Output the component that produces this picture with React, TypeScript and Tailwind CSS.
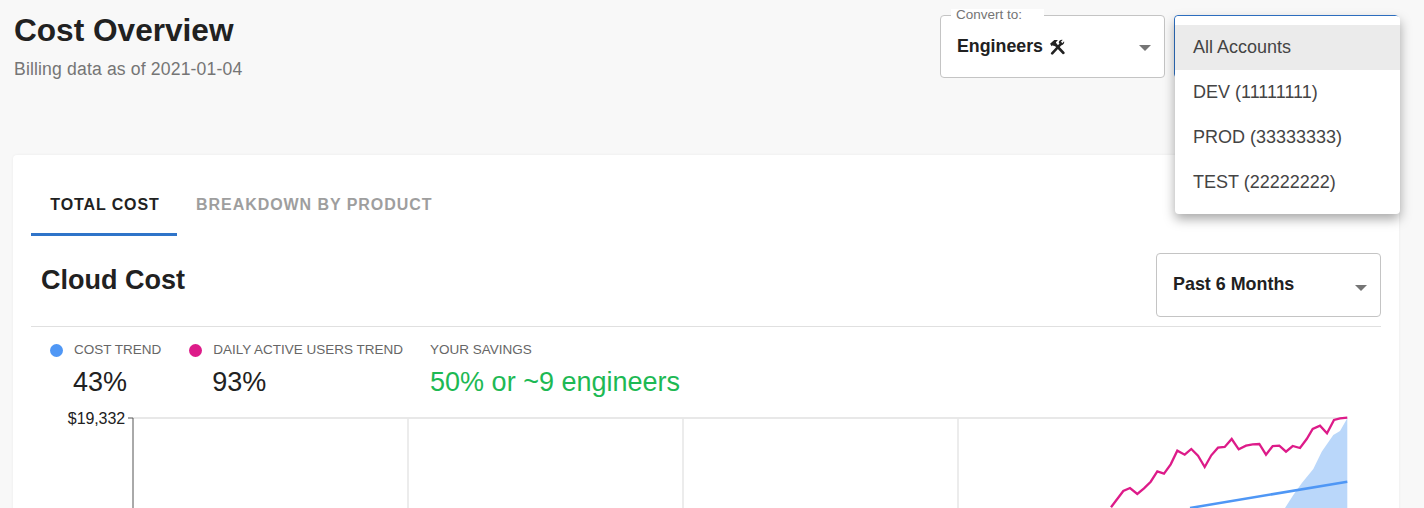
import React from 'react';

const font = "font-['Liberation_Sans',Arial,sans-serif]";

const accounts = ['All Accounts', 'DEV (11111111)', 'PROD (33333333)', 'TEST (22222222)'];

const pinkLine =
  '1111,507.3 1123.3,491 1130,488 1137.3,494 1144,488.3 1150.7,481.7 1157.3,471.3 1164,473.7 1170.7,464.3 1177.3,450.7 1184.7,454.7 1191.3,449 1198,455.7 1204.7,467 1211.3,455.3 1218,447.7 1224.7,447 1231.7,439 1238.7,449.3 1246,445.7 1252.7,444.3 1259.3,444 1266,454.7 1272.7,446 1279.3,445.7 1286,451.7 1292.7,446 1300,448 1306.7,439 1312.7,429 1320,425.7 1327,433.3 1334,420 1340,418.3 1347.3,417.7 ';

const savingsArea =
  '1285,508 1293.3,495 1301.7,483.3 1313.3,469 1321.7,451.7 1333.3,435 1340,431 1347.3,418.3 1347.3,508';

function Caret({ className = '' }: { className?: string }) {
  return (
    <svg width="12" height="6" viewBox="0 0 12 6" className={className}>
      <path d="M0 0h12L6 6z" fill="#757575" />
    </svg>
  );
}

function ToolsIcon() {
  return (
    <svg width="17" height="16" viewBox="0 0 16 15" className="ml-[6px] mt-[1px]">
      <path d="M4.5 3.5 13.5 13" stroke="#222" strokeWidth="2.6" strokeLinecap="round" fill="none" />
      <path d="M1 4.5 5 .8h3.4L6.5 3 7 5 5 6.8 3.5 5.8 2.5 6.8z" fill="#222" />
      <path d="M3 13.5 11.2 4.5" stroke="#222" strokeWidth="2.4" strokeLinecap="round" fill="none" />
      <path d="M9.2 3.5C9.2 1.6 11 .5 12.8.8l-1.6 1.8 1.3 1.3L14.2 2.2c.5 1.8-.7 3.7-2.7 3.6z" fill="#222" />
    </svg>
  );
}

function SelectBox({ label, tall, children }: { label?: string; tall?: boolean; children: React.ReactNode }) {
  return (
    <div
      className={`relative flex w-[225px] items-start justify-between rounded-[4px] border border-[#c4c4c4] bg-white pl-4 pr-[13px] pt-[19px] ${
        tall ? 'h-[64px]' : 'h-[63px]'
      }`}
    >
      {label && (
        <span className="absolute left-[10px] top-[-7px] h-2 w-[93px] bg-white pl-[5px] text-[13.5px] leading-[12px] text-[#757575]">
          {label}
        </span>
      )}
      {children}
    </div>
  );
}

function Legend({ color, label, value }: { color: string; label: string; value: string }) {
  return (
    <div className="flex flex-col">
      <div className="flex h-[20px] items-center">
        <span className="mr-[11px] h-[13px] w-[13px] rounded-full" style={{ background: color }} />
        <span className="text-[13.5px] text-[#666]">{label}</span>
      </div>
      <div className="ml-[23px] mt-[5px] text-[27px] leading-[34px] text-[#212121]">{value}</div>
    </div>
  );
}

function Chart() {
  return (
    <svg viewBox="31 410 1350 98" width="1350" height="98" className="mt-[1px] block">
      <path d="M133 418H1347" stroke="#e8e8e8" strokeWidth="2" />
      <path d="M408 418V508M683 418V508M958 418V508" stroke="#e6e6e6" strokeWidth="1.5" />
      <path d="M128 418H133V508" stroke="#555" strokeWidth="1" fill="none" />
      <text x="125" y="424" textAnchor="end" fontSize="16" letterSpacing="-0.1" fill="#212121" fontFamily="Liberation Sans">
        $19,332
      </text>
      <polygon points={savingsArea} fill="#bad7fa" />
      <path d="M1190 508 1347.3 481.7" stroke="#4f97f5" strokeWidth="2.5" fill="none" />
      <polyline points={pinkLine} stroke="#dd1b89" strokeWidth="2.3" fill="none" />
    </svg>
  );
}

export default function App() {
  return (
    <div className={`${font} relative h-[508px] overflow-hidden bg-[#f8f8f8] pl-[13px] pr-[25px] text-[#212121]`}>
      <header className="flex h-[155px] items-start justify-between">
        <div className="pl-[1px] pt-[11px]">
          <h1 className="text-[31.6px] font-bold leading-[38px]">Cost Overview</h1>
          <p className="mt-[10px] text-[17.6px] leading-[20px] tracking-[0.15px] text-[#757575]">Billing data as of 2021-01-04</p>
        </div>
        <div className="flex gap-[9px] pt-[15px]">
          <SelectBox label="Convert to:">
            <span className="flex items-center text-[17.8px] font-bold leading-[22px]">
              Engineers
              <ToolsIcon />
            </span>
            <Caret className="mt-[10px]" />
          </SelectBox>
          <div className="h-[63px] w-[225px] rounded-[4px] border border-[#2f74c9] bg-white" />
        </div>
      </header>

      <div className="absolute left-[1175px] top-[16px] z-10 w-[225px] rounded-[4px] bg-white py-[9px] shadow-[0_5px_12px_rgba(0,0,0,0.35)]">
        {accounts.map((name, i) => (
          <div
            key={name}
            className={`flex h-[45px] items-center pl-[18px] text-[18px] text-[#444] ${i === 0 ? 'bg-[#ebebeb]' : ''}`}
          >
            {name}
          </div>
        ))}
      </div>

      <main className="h-[400px] rounded-[4px] bg-white px-[18px] shadow-[0_0_3px_rgba(0,0,0,0.06)]">
        <nav className="flex h-[81px] items-stretch">
          <div className="flex w-[146px] items-center justify-center border-b-[3px] border-[#2f74c9] pl-[2px] pt-[21px] text-[16px] font-bold tracking-[0.9px] text-[#212121]">
            TOTAL COST
          </div>
          <div className="flex items-center pl-[19px] pt-[19px] text-[16px] font-bold tracking-[0.95px] text-[#9e9e9e]">
            BREAKDOWN BY PRODUCT
          </div>
        </nav>

        <div className="flex h-[91px] items-start justify-between border-b border-[#e0e0e0] pt-[17px]">
          <h2 className="pl-[10px] pt-[8px] text-[27px] font-bold leading-[38px]">Cloud Cost</h2>
          <SelectBox tall>
            <span className="text-[17.9px] font-bold leading-[22px]">Past 6 Months</span>
            <Caret className="mt-[12px]" />
          </SelectBox>
        </div>

        <div className="flex h-[82px] items-start pl-[19px] pt-[13px]">
          <Legend color="#4f97f5" label="COST TREND" value="43%" />
          <div className="ml-[28px]">
            <Legend color="#dd1b89" label="DAILY ACTIVE USERS TREND" value="93%" />
          </div>
          <div className="ml-[27px] flex flex-col">
            <div className="flex h-[20px] items-center text-[13.5px] text-[#666]">YOUR SAVINGS</div>
            <div className="mt-[5px] text-[27px] leading-[34px] text-[#1db954]">50% or ~9 engineers</div>
          </div>
        </div>

        <Chart />
      </main>
    </div>
  );
}
